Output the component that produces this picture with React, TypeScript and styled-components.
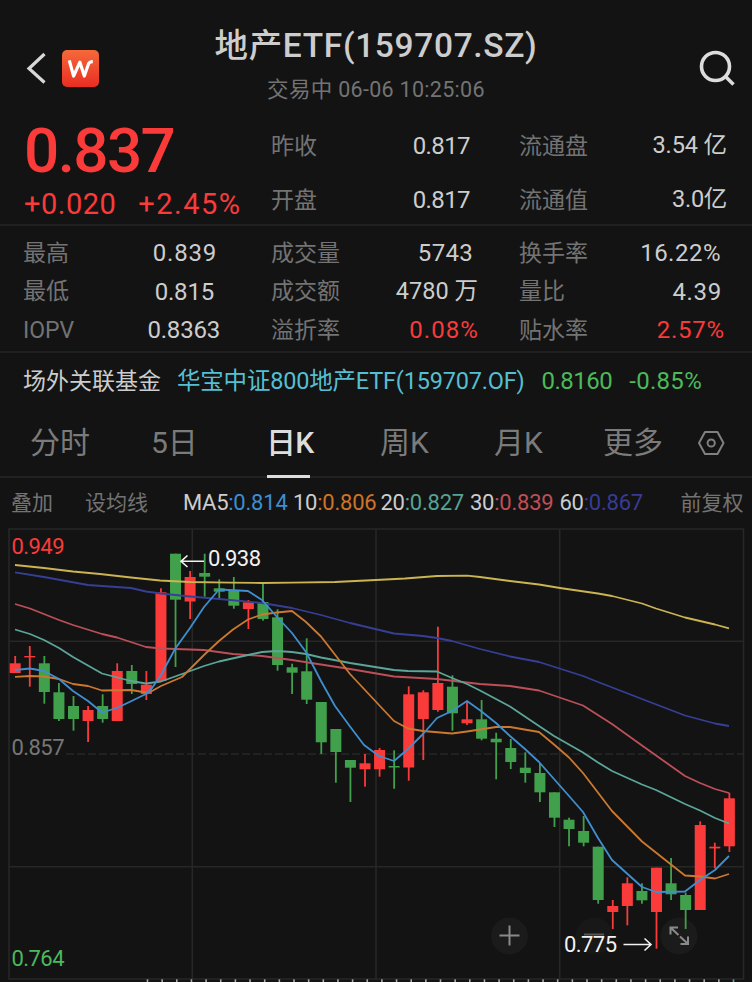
import React from "react";
import styled, { createGlobalStyle } from "styled-components";

const color = {
  bg: "#131313",
  text: "#cdcdcd",
  muted: "#737373",
  line: "#272727",
  red: "#fb3a3a",
  green: "#41a04b",
  lime: "#4cb95b",
  cyan: "#55bfd2",
};

const Global = createGlobalStyle`
  * { box-sizing: border-box; }
  html, body { margin: 0; background: ${color.bg}; }
  body { font-family: Roboto, "Noto Sans CJK SC", sans-serif; overflow: hidden; }
`;

const Screen = styled.main`
  width: 752px;
  height: 982px;
  display: flex;
  flex-direction: column;
  overflow: hidden;
  background: ${color.bg};
  color: ${color.text};
`;

const Text = styled.span<{ $size?: number; $track?: number; $tone?: string; $weight?: number }>`
  display: inline-block;
  white-space: pre;
  line-height: 1;
  font-size: ${(p) => p.$size ?? 24}px;
  letter-spacing: ${(p) => p.$track ?? 0}px;
  color: ${(p) => p.$tone ?? color.text};
  font-weight: ${(p) => p.$weight ?? 400};
`;

const Header = styled.header`
  height: 116px;
  flex: none;
  display: grid;
  grid-template-columns: 130px 1fr 130px;
`;
const HeaderSide = styled.div<{ $end?: boolean }>`
  display: flex;
  align-items: center;
  gap: 16px;
  height: 136px;
  padding: ${(p) => (p.$end ? "0 16px 0 0" : "0 0 0 26px")};
  justify-content: ${(p) => (p.$end ? "flex-end" : "flex-start")};
`;
const HeaderTitle = styled.div`
  display: flex;
  flex-direction: column;
  align-items: center;
  padding-top: 29px;
  gap: 16px;
`;

const Quote = styled.section`
  height: 110px;
  flex: none;
  display: grid;
  grid-template-columns: 271px 1fr;
  border-bottom: 2px solid #202020;
`;
const PriceBlock = styled.div`
  padding: 4px 0 0 24px;
`;
const Changes = styled.div`
  display: flex;
  gap: 22px;
  margin-top: 8px;
`;
const QuoteStats = styled.div`
  display: grid;
  grid-template-rows: 54px 54px;
  padding-top: 3px;
`;
const Stats = styled.section`
  height: 127px;
  flex: none;
  padding: 8px 0 0 23px;
  display: grid;
  grid-template-rows: repeat(3, 38.5px);
  align-content: start;
  border-bottom: 2px solid #202020;
`;
const StatRow = styled.div<{ $cols: string }>`
  display: grid;
  grid-template-columns: ${(p) => p.$cols};
  align-items: center;
`;
const Cell = styled.div<{ $right: number }>`
  display: flex;
  justify-content: space-between;
  align-items: center;
  padding-right: ${(p) => p.$right}px;
`;

const Fund = styled.section`
  height: 53px;
  flex: none;
  display: flex;
  align-items: baseline;
  padding: 16px 0 0 23px;
`;
const Gap = styled.span<{ $w: number }>`
  flex: none;
  width: ${(p) => p.$w}px;
`;

const Tabs = styled.nav`
  height: 72px;
  flex: none;
  display: grid;
  grid-template-columns: 121px 115px 114px 114px 109px 94px 28px;
  padding-left: 30px;
  border-bottom: 2px solid #222222;
`;
const Tab = styled.div<{ $active?: boolean }>`
  display: flex;
  flex-direction: column;
  justify-content: space-between;
  align-items: flex-start;
  padding-top: 22px;
  &::after {
    content: "";
    width: 43px;
    height: 3px;
    margin-left: 1px;
    background: ${(p) => (p.$active ? "#dddddd" : "transparent")};
  }
`;

const Averages = styled.section`
  height: 50px;
  flex: none;
  display: grid;
  align-items: center;
  grid-template-columns: 74px 98px 110px 87.5px 89.5px 89.5px 121px 1fr;
  padding-left: 11px;
`;
const Average = styled.div`
  display: flex;
`;

const ChartSvg = styled.svg`
  display: block;
  flex: none;
  font-family: Roboto, sans-serif;
`;

type StatData = [label: string, value: string, right: number, track?: number, tone?: string];

const quoteRows: StatData[][] = [
  [["昨收", "0.817", 49, -0.6], ["流通盘", "3.54 亿", 25, -0.1]],
  [["开盘", "0.817", 49, -0.6], ["流通值", "3.0亿", 25, -0.3]],
];
const statRows: StatData[][] = [
  [["最高", "0.839", 54, 0.8], ["成交量", "5743", 46, 0.3], ["换手率", "16.22%", 31, 0.5]],
  [["最低", "0.815", 57, -0.2], ["成交额", "4780 万", 41, 0], ["量比", "4.39", 30, 0.7]],
  [["IOPV", "0.8363", 51, -0.2], ["溢折率", "0.08%", 40, 1.1, color.red], ["贴水率", "2.57%", 27, 0.8, color.red]],
];

const Stat = ({ data: [label, value, right, track, tone] }: { data: StatData }) => (
  <Cell $right={right}>
    <Text $size={23} $tone={color.muted}>{label}</Text>
    <Text $size={/[亿万]/.test(value) ? 23.5 : 24} $track={track} $tone={tone}>{value}</Text>
  </Cell>
);

const tabs = ["分时", "5日", "日K", "周K", "月K", "更多"];
const averages: [string, string, string][] = [
  ["MA5", "0.814", "#3d8ed0"],
  ["10", "0.806", "#cf7426"],
  ["20", "0.827", "#56a396"],
  ["30", "0.839", "#c04e56"],
  ["60", "0.867", "#363c96"],
];

type Candle = [dir: "u" | "d", high: number, top: number, bottom: number, low: number];
const candles: Candle[] = [
  ["u", 656, 663.3, 673, 673], ["u", 646, 656, 657.4, 686.7], ["d", 656, 663.3, 692, 703.7],
  ["d", 683, 692.3, 719, 721], ["d", 696, 706, 719, 730.7], ["u", 706, 710, 721, 742],
  ["d", 694.3, 706, 719, 722.7], ["u", 663.3, 671, 721, 721], ["d", 665, 671, 684, 694],
  ["u", 671, 684.7, 694, 700], ["u", 588.3, 592.3, 681, 681], ["d", 553.7, 553.7, 599.7, 667],
  ["u", 571, 577, 601.5, 619], ["d", 553.7, 573, 576.7, 596.7], ["d", 579.3, 588.3, 591.7, 598],
  ["d", 577, 591, 605.7, 608.7], ["u", 600, 602.3, 609, 629], ["d", 584, 602, 619, 620.7],
  ["d", 609.3, 617.3, 665, 670.7], ["d", 663.7, 667.3, 672.7, 694], ["d", 638.3, 671.3, 699.7, 704],
  ["d", 702, 702, 742.3, 754], ["d", 729, 729, 752, 782.7], ["d", 760, 760, 767.7, 802],
  ["u", 754, 763.3, 769.3, 786.7], ["u", 748, 750, 769.3, 776.7], ["d", 750.3, 766, 767.5, 788.7],
  ["u", 686.3, 694.3, 767.5, 780.7], ["u", 690.3, 692.3, 719, 760], ["u", 626.7, 683, 710, 711.7],
  ["d", 675.3, 686.7, 713.3, 730.7], ["u", 701.7, 719.3, 723.3, 725], ["d", 700, 719.3, 738.7, 740.3],
  ["d", 732.7, 738.7, 742.3, 779.3], ["d", 739, 748, 762, 769], ["d", 752.3, 767.7, 773, 782.7],
  ["d", 763, 773, 792.3, 802], ["d", 792.3, 792.3, 817.7, 827], ["d", 817.7, 819.7, 829, 846.3],
  ["d", 816, 831, 842.7, 846.3], ["d", 846.7, 846.7, 900, 903.7], ["u", 900, 906, 912, 929],
  ["u", 877.3, 883.3, 906, 925.3], ["d", 883.3, 891, 900.3, 903.7], ["u", 867.7, 867.7, 912, 948.7],
  ["d", 858, 883.3, 894.3, 900], ["d", 892.7, 895, 910, 929], ["u", 821.3, 825, 910, 910],
  ["u", 842.7, 846.7, 848.4, 868.3], ["u", 792.7, 798.3, 846.3, 852],
];

const curves: [string, string][] = [
  ["#cbb452", "15,565 44,568 73,571.5 100,574 131,577.5 160,580.5 190,582 230,582.7 262,583 292,582.7 335,582 376,580 405,578.5 437,576 467,575.7 480,577 510,581 539,584.5 560,588 598,593.5 612,596 642,603.5 656,608.5 685,617.5 715,624.5 729,628.3"],
  ["#363f96", "15,572.3 44,577 88,585 102,586 131,588 146,591.5 161,593.5 190,596.5 219,599 262,603 292,608 321,615 350,623 394,633.5 423,636 437,638 452,641 480,649 510,656.5 539,662 583,676 598,682 642,699 685,715.5 715,723.5 729,726"],
  ["#bd4f58", "15,604 30,608.5 59,620 73,625 102,634 117,637.5 146,647 161,648.5 204,650 233,654 262,656 292,660 350,669 394,676.5 437,679 467,682.5 480,684 510,686 539,690.5 583,705.5 612,724 642,745.5 685,776 700,783 715,789 729,793"],
  ["#5ba699", "15,629.5 30,634 44,640 59,648 73,657 102,673.5 131,681 146,683.5 161,681.5 182,674 204,666 219,661.5 248,655 262,652 277,651 292,652 306,654 321,657.5 350,663 394,670 408,671 437,671.5 452,678 467,684 480,690.5 510,706.5 539,726 554,736 583,752.5 598,762.5 612,771 642,784.5 656,790 685,804 700,810.5 715,818 729,823.5"],
  ["#cc7830", "15,676.8 30,676 44,676.5 59,679 73,684 88,686 102,690.5 131,690 146,692.5 152,691 161,686 182,677 190,669 204,655 219,641 233,629.5 248,619.5 262,614.5 277,612.5 292,611 306,622 321,636.5 350,674 379,705 394,721 408,728.5 423,731 452,733.5 467,731.5 496,727 510,727 539,732 554,744.5 569,757.5 583,773 612,811 642,841.5 671,864.5 685,875.5 700,876.5 715,878.5 729,874"],
  ["#3f8fd0", "15,670 30,668.5 44,671 59,679 73,691 88,701 102,712.5 117,708 146,694 152,688 161,675 175,649 190,628 204,607 219,589.5 248,591 262,600 277,617 292,633 306,652 321,681 335,706 350,726.5 364,745 379,756 394,761 408,749 423,734 437,718 452,711 467,701 481,711 496,723 510,736 525,749 539,762 554,779 569,796 583,812 598,838 612,860 642,887 656,892 685,891.5 700,880 715,870 729,856"],
];

const Chart = () => (
  <ChartSvg width="752" height="454" viewBox="0 528 752 454">
    <g stroke={color.line} strokeWidth="1.6" fill="none">
      <path d="M9 529H743.5V979H9ZM192.3 529V979M376 529V979M559.7 529V979M9 641.2H743.5M9 866.7H743.5" />
      <path d="M66 754H743.5" strokeDasharray="8 3" />
    </g>
    {Array.from({ length: 41 }, (_, i) => (
      <rect key={i} x={146.7 + i * 14.65} y="979.3" width="1.6" height="3" fill={i === 40 ? "#5ba699" : "#aaaaaa"} />
    ))}
    <g fill="#1b1b1b">
      <circle cx="509.5" cy="936" r="18.5" />
      <circle cx="594" cy="936" r="18.5" fill="#181818" />
      <circle cx="679" cy="936" r="18.5" />
    </g>
    {candles.map(([dir, high, top, bottom, low], i) => {
      const x = 15.2 + i * 14.575;
      const fill = dir === "u" ? color.red : color.green;
      return (
        <g key={i} fill={fill}>
          <rect x={x - 0.9} y={high} width="1.8" height={low - high} />
          <rect x={x - 5.5} y={top} width="11" height={bottom - top} />
        </g>
      );
    })}
    {curves.map(([stroke, points]) => (
      <polyline key={stroke} points={points} fill="none" stroke={stroke} strokeWidth="1.8" strokeLinejoin="round" />
    ))}
    <g stroke="#8a8a8a" strokeWidth="2" fill="none">
      <path d="M499.5 935.5H519.5M509.5 925.5V945.5" />
      <path d="M584 934.5H604" stroke="#555555" />
      <path d="M670.5 934.5V927.5H678M671 928L678.5 935M680.5 944H688V936.5M687.5 943.5L680 936.5" />
    </g>
    <g stroke="#f2f2f2" strokeWidth="1.6" fill="none">
      <path d="M204 561.3H181M187.5 555.5L181 561.3L187.5 567" />
      <path d="M623.5 944.5H651M644.5 938.5L651 944.5L644.5 950.5" />
    </g>
    <g fontSize="22">
      <text x="11.5" y="554" fill={color.red} textLength="53">0.949</text>
      <text x="11.5" y="755" fill="#777777" textLength="53">0.857</text>
      <text x="11.5" y="966" fill={color.lime} textLength="53">0.764</text>
      <text x="208" y="566" fill="#f2f2f2" textLength="53">0.938</text>
      <text x="564" y="951.5" fill="#f2f2f2" textLength="53">0.775</text>
    </g>
  </ChartSvg>
);

export default function App() {
  return (
    <>
      <Global />
      <Screen>
        <Header>
          <HeaderSide>
            <svg width="20" height="32" viewBox="0 0 20 32" fill="none" stroke="#d8d8d8" strokeWidth="3.2">
              <path d="M18.5 2L3 16.5L18.5 30.5" />
            </svg>
            <svg width="37" height="37" viewBox="0 0 37 37">
              <defs>
                <linearGradient id="brand" x1="0" y1="0" x2="0" y2="1">
                  <stop offset="0" stopColor="#f5693a" />
                  <stop offset="1" stopColor="#e92d22" />
                </linearGradient>
              </defs>
              <rect width="37" height="37" rx="5" fill="url(#brand)" />
              <path d="M7.3 10.4L11.6 26L17.9 12.2L22.3 26L26.4 14.2Q27.4 11.7 30.8 11.7" fill="none" stroke="#fff" strokeWidth="3.2" strokeLinejoin="round" />
            </svg>
          </HeaderSide>
          <HeaderTitle>
            <Text $size={33.5} $track={0.65} $weight={500}>地产ETF(159707.SZ)</Text>
            <Text $size={21.5} $track={0.3} $tone={color.muted}>交易中 06-06 10:25:06</Text>
          </HeaderTitle>
          <HeaderSide $end>
            <svg width="37" height="37" viewBox="0 0 37 37" fill="none" stroke="#dcdcdc" strokeWidth="3.6">
              <circle cx="16.5" cy="16.5" r="14" />
              <path d="M26 26L34.5 34.5" />
            </svg>
          </HeaderSide>
        </Header>
        <Quote>
          <PriceBlock>
            <Text $size={62} $track={-1.6} $tone={color.red} $weight={500}>0.837</Text>
            <Changes>
              <Text $size={29} $track={0.5} $tone={color.red}>+0.020</Text>
              <Text $size={29} $track={1.5} $tone={color.red}>+2.45%</Text>
            </Changes>
          </PriceBlock>
          <QuoteStats>
            {quoteRows.map((row, i) => (
              <StatRow key={i} $cols="248px 1fr">
                {row.map((s) => <Stat key={s[0]} data={s} />)}
              </StatRow>
            ))}
          </QuoteStats>
        </Quote>
        <Stats>
          {statRows.map((row, i) => (
            <StatRow key={i} $cols="248px 248px 1fr">
              {row.map((s) => <Stat key={s[0]} data={s} />)}
            </StatRow>
          ))}
        </Stats>
        <Fund>
          <Text $size={23}>场外关联基金</Text>
          <Gap $w={16} />
          <Text $size={23.5} $track={-0.2} $tone={color.cyan}>华宝中证800地产ETF(159707.OF)</Text>
          <Gap $w={17} />
          <Text $track={-0.5} $tone={color.lime}>0.8160</Text>
          <Gap $w={17} />
          <Text $track={0.3} $tone={color.lime}>-0.85%</Text>
        </Fund>
        <Tabs>
          {tabs.map((t) => (
            <Tab key={t} $active={t === "日K"}>
              <Text $size={30} $track={t === "日K" ? -0.8 : 0} $weight={t === "日K" ? 500 : 400} $tone={t === "日K" ? "#dddddd" : "#7b7b7b"}>{t}</Text>
            </Tab>
          ))}
          <svg width="28" height="72" viewBox="0 0 28 72" fill="none" stroke="#808080" strokeWidth="2">
            <path d="M8 26H20.5L26.5 37L20.5 48H8L2 37Z" strokeLinejoin="round" />
            <circle cx="14.2" cy="37" r="3.6" />
          </svg>
        </Tabs>
        <Averages>
          <Text $size={21} $tone={color.muted}>叠加</Text>
          <Text $size={21} $tone={color.muted}>设均线</Text>
          {averages.map(([name, value, tone]) => (
            <Average key={name}>
              <Text $size={22} $track={-0.3}>{name}</Text>
              <Text $size={22} $track={-0.2} $tone={tone}>:{value}</Text>
            </Average>
          ))}
          <Text $size={21} $tone={color.muted}>前复权</Text>
        </Averages>
        <Chart />
      </Screen>
    </>
  );
}
